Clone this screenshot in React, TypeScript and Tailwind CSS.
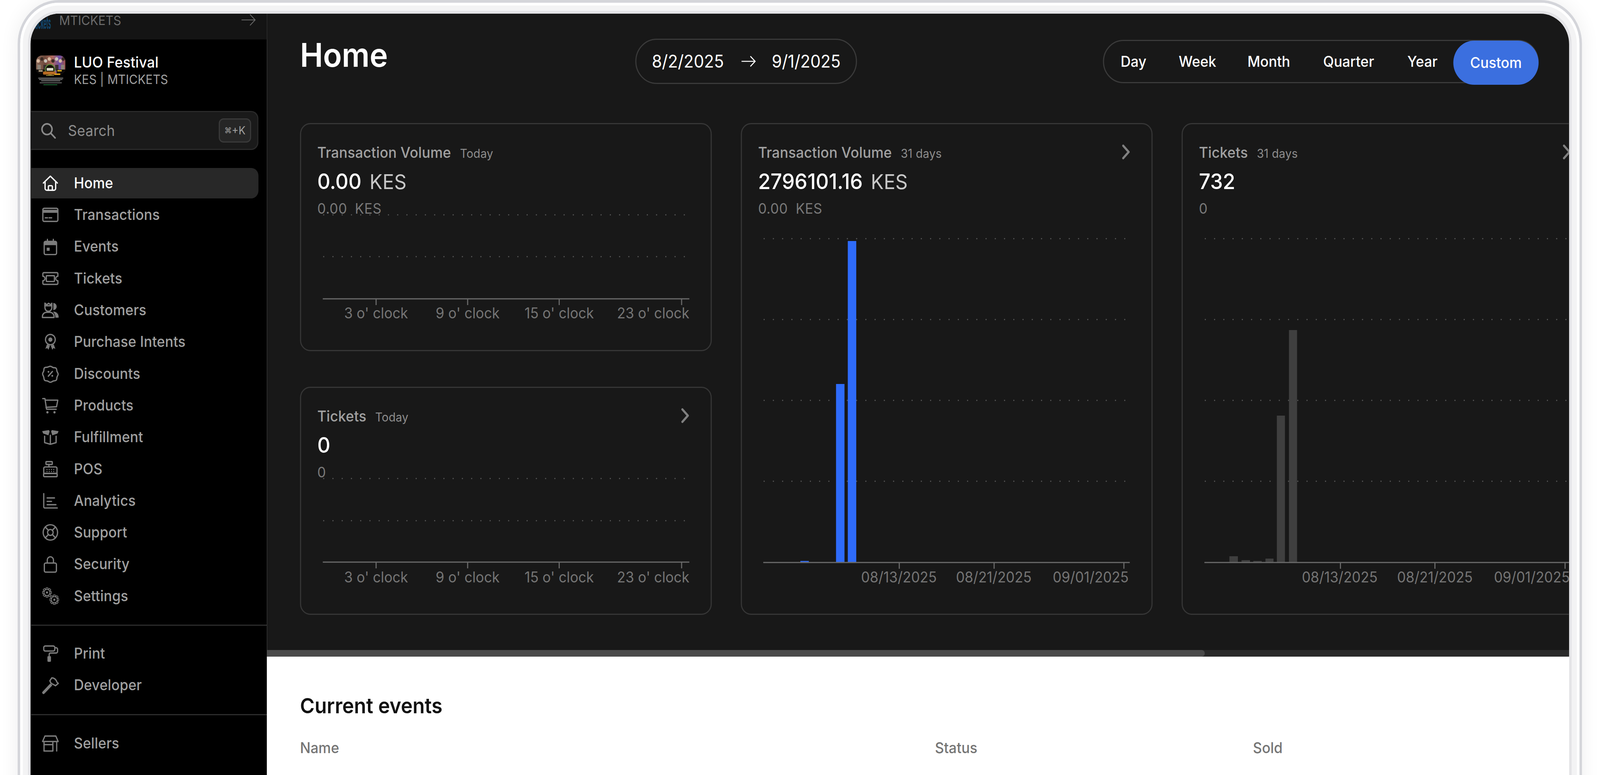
import React from "react";

const stroke = { fill: "none", stroke: "currentColor", strokeWidth: 1.7, strokeLinecap: "round" as const, strokeLinejoin: "round" as const };

function Gear({ cx, cy, r }: { cx: number; cy: number; r: number }) {
  const teeth = Array.from({ length: 8 }, (_, i) => i * 45);
  return (
    <g>
      {teeth.map((a) => (
        <rect key={a} x={cx - r * 0.3} y={cy - r - r * 0.32} width={r * 0.6} height={r * 0.5} rx={0.3} transform={`rotate(${a} ${cx} ${cy})`} fill="none" stroke="currentColor" strokeWidth={0.9} />
      ))}
      <circle cx={cx} cy={cy} r={r * 0.88} fill="#000" stroke="currentColor" strokeWidth={1.1} />
      <circle cx={cx} cy={cy} r={r * 0.3} fill="currentColor" />
    </g>
  );
}

const icons: Record<string, React.ReactNode> = {
  Home: (
    <g {...stroke}>
      <path d="M2.5 11.8 12 3l9.5 8.8" />
      <path d="M4.8 10v8.6A2.4 2.4 0 0 0 7.2 21h9.6a2.4 2.4 0 0 0 2.4-2.4V10" />
      <path d="M9.3 21v-4.6a1.2 1.2 0 0 1 1.2-1.2h3a1.2 1.2 0 0 1 1.2 1.2V21" />
    </g>
  ),
  Transactions: (
    <g>
      <rect x="1.8" y="3.6" width="20.4" height="16.8" rx="1.8" {...stroke} />
      <rect x="2" y="5.6" width="20" height="3.8" fill="currentColor" />
      <path d="M5 15.8h3.2M10.2 15.8h3.6" {...stroke} />
    </g>
  ),
  Events: (
    <g>
      <rect x="3.6" y="5" width="16.8" height="16.8" rx="1.8" {...stroke} />
      <rect x="4" y="5.4" width="16" height="4.4" fill="currentColor" />
      <path d="M8 2.4v3M16 2.4v3" {...stroke} />
      <rect x="7" y="13" width="4" height="4" fill="currentColor" />
    </g>
  ),
  Tickets: (
    <g {...stroke}>
      <path d="M3.2 4.5h17.6a1.4 1.4 0 0 1 1.4 1.4v3.2a2.9 2.9 0 0 0 0 5.8v3.2a1.4 1.4 0 0 1-1.4 1.4H3.2a1.4 1.4 0 0 1-1.4-1.4v-3.2a2.9 2.9 0 0 0 0-5.8V5.9a1.4 1.4 0 0 1 1.4-1.4Z" />
      <rect x="6.5" y="8.4" width="11" height="7.4" rx="0.8" />
    </g>
  ),
  Customers: (
    <g>
      <path d="M4.6 3 7 5.2 9.6 3.2 12.4 5.2l1.6-2v5.6a4.7 4.7 0 0 1-9.4 0Z" {...stroke} />
      <path d="M4.6 6.4h9.4" {...stroke} />
      <path d="M1.2 21.4v-1.2A5.4 5.4 0 0 1 6.6 14.8h5a5.4 5.4 0 0 1 5.4 5.4v1.2Z" {...stroke} />
      <path d="M16 2.8a4.6 4.6 0 0 1 0 9.2Z" fill="currentColor" />
      <path d="M15.6 14a6.6 6.6 0 0 1 7.6 6v1.6h-4.4c0-3-1-5.6-3.2-7.6Z" fill="currentColor" />
    </g>
  ),
  "Purchase Intents": (
    <g>
      <circle cx="12" cy="9.2" r="6.6" {...stroke} strokeDasharray="3.2 0.5" />
      <circle cx="12" cy="9.2" r="2.8" fill="currentColor" />
      <path d="M7.4 15.4 5.2 21l2.6-1 1.6 2.2 2-5.2M16.6 15.4l2.2 5.6-2.6-1-1.6 2.2-2-5.2" fill="currentColor" />
    </g>
  ),
  Discounts: (
    <g>
      <path d="M12 2.4c1.6 0 2.5 1.3 3.8 1.6s3-.1 4 .9.8 2.7 1.2 3.9 1.6 2.3 1.6 3.7-1.2 2.4-1.6 3.7.1 2.9-1 3.9-2.7.7-4 1.1-2.4 1.6-4 1.6-2.5-1.2-3.9-1.6-3-.1-4-1.1-.7-2.6-1.1-3.9S1.4 13.4 1.4 12s1.2-2.4 1.6-3.7-.1-2.9.9-3.9 2.7-.6 4-.9S10.4 2.4 12 2.4Z" {...stroke} />
      <path d="M14.8 9 9.2 15" {...stroke} />
      <circle cx="9.4" cy="9.4" r="1.2" fill="currentColor" />
      <circle cx="14.6" cy="14.6" r="1.2" fill="currentColor" />
    </g>
  ),
  Products: (
    <g>
      <path d="M1.6 3.2h3l2.2 13.6h13.2" {...stroke} />
      <path d="M4.9 5.2h17.2l-1.700 8.400-14.300.8" {...stroke} />
      <circle cx="8" cy="20.8" r="1.500" fill="currentColor" />
      <circle cx="17.6" cy="20.8" r="1.500" fill="currentColor" />
    </g>
  ),
  Fulfillment: (
    <g>
      <path d="M4.2 10.8v8.3L12 21.2l7.8-2.1v-8.3M12 9.6v11.4" {...stroke} />
      <path d="M.8 4.4 10 3l1 1.8-1.6 4.9-7.2-2.3ZM23.2 4.4 14 3l-1 1.8 1.6 4.9 7.2-2.3Z" fill="currentColor" />
    </g>
  ),
  POS: (
    <g>
      <rect x="6" y="2.4" width="8.6" height="3.6" rx="0.8" {...stroke} />
      <path d="M10 6v3" {...stroke} />
      <path d="M4.8 9.2h14.4a1.8 1.8 0 0 1 1.8 1.8v6.4H3V11a1.8 1.8 0 0 1 1.8-1.8Z" {...stroke} />
      <rect x="2.8" y="17.6" width="18.4" height="4" rx="1" {...stroke} />
      <path d="M7.4 12.4h.1M10.4 12.4h.1M13.5 12.4h.1M16.5 12.4h.1M7.4 15h.1M10.4 15h.1M13.5 15h.1M16.5 15h.1" {...stroke} strokeWidth={1.5} />
    </g>
  ),
  Analytics: (
    <g {...stroke}>
      <path d="M3 2.8v17a1.4 1.4 0 0 0 1.4 1.4h17" />
      <path d="M7.6 8.4h10M7.6 12.8h6M7.6 17h12" />
    </g>
  ),
  Support: (
    <g {...stroke}>
      <circle cx="12" cy="12" r="9.8" />
      <circle cx="12" cy="12" r="3.8" />
      <path d="m5 5 4.4 4.4M19 5l-4.4 4.4M5 19l4.4-4.4M19 19l-4.4-4.4" />
    </g>
  ),
  Security: (
    <g {...stroke}>
      <rect x="3.8" y="10.2" width="16.4" height="11.6" rx="1.8" />
      <path d="M7.8 10V6.4a4.2 4.2 0 0 1 8.4 0V10" />
    </g>
  ),
  Settings: (
    <g>
      <Gear cx={7.4} cy={7.4} r={4.6} />
      <Gear cx={17.4} cy={16.6} r={4.6} />
    </g>
  ),
  Print: (
    <g>
      <rect x="3" y="2.4" width="15" height="6.4" rx="2" {...stroke} />
      <path d="M18.4 4.6h1.4a2 2 0 0 1 2 2v2.8a2 2 0 0 1-2 2H12a1.6 1.6 0 0 0-1.6 1.6v1.6" {...stroke} />
      <rect x="8" y="15.2" width="4.8" height="7.4" rx="1.4" fill="currentColor" />
    </g>
  ),
  Developer: (
    <g>
      <path d="M1.5 20.3 12 9.8l2.6 2.6L4 22.8a1.8 1.8 0 0 1-2.6 0 1.8 1.8 0 0 1 .1-2.5Z" fill="currentColor" />
      <path d="M11.3 6.4 14 2.6c3.4.2 6 2.5 7.1 5.8l1.7 1.3-3.8 3-2.4-1.3-2.7-1.2-1.5-1.5Z" {...stroke} />
    </g>
  ),
  Sellers: (
    <g {...stroke}>
      <path d="M4.6 2.6h14.8l3.2 7H1.4Z" />
      <path d="M3.4 9.8v12M20.6 9.8v12" />
      <path d="M3.4 13.6h12v8.2h-12M15.4 9.8v12" />
    </g>
  ),
};

function NavIcon({ name }: { name: string }) {
  return (
    <svg viewBox="0 0 24 24" className="w-[48px] h-[48px] shrink-0">
      {icons[name]}
    </svg>
  );
}

function NavItem({ name, active }: { name: string; active?: boolean }) {
  return (
    <div className={`h-[78px] mb-[3.3px] w-[620px] flex items-center pl-[30px] rounded-r-[20px] ${active ? "bg-[#282828] text-white" : "text-[#7d7d7d]"}`}>
      <NavIcon name={name} />
      <span className={`ml-[40px] text-[37.5px] font-medium tracking-[0.2px] ${active ? "text-white" : "text-[#a0a0a0]"}`}>{name}</span>
    </div>
  );
}

function Poster() {
  return (
    <svg viewBox="0 0 80 80" className="w-[80px] h-[80px] shrink-0">
      <defs>
        <clipPath id="posterClip">
          <rect x="0" y="0" width="80" height="48" rx="16" />
        </clipPath>
        <linearGradient id="crowd" x1="0" x2="1">
          <stop offset="0" stopColor="#8a6a5a" />
          <stop offset="0.3" stopColor="#6f4a3c" />
          <stop offset="0.55" stopColor="#b06a5c" />
          <stop offset="0.8" stopColor="#6a4fa8" />
          <stop offset="1" stopColor="#a0544a" />
        </linearGradient>
      </defs>
      <g clipPath="url(#posterClip)">
        <rect width="80" height="48" fill="url(#crowd)" />
        {[6, 16, 26, 36, 46, 56, 66, 74].map((x, i) => (
          <circle key={x} cx={x} cy={i % 2 ? 9 : 14} r="4.5" fill={i % 3 === 0 ? "#d8b9a0" : i % 3 === 1 ? "#3a2a24" : "#c9c2b8"} />
        ))}
        {[4, 20, 34, 52, 68].map((x, i) => (
          <rect key={x} x={x} y={24} width="9" height="14" fill={i % 2 ? "#3c3030" : "#8e8478"} />
        ))}
        <rect x="0" y="36" width="26" height="12" fill="#0c0a08" />
        <rect x="56" y="36" width="24" height="12" fill="#0c0a08" />
        <rect x="7" y="37" width="11" height="5" fill="#9a8a70" />
        <rect x="58" y="37" width="12" height="4" fill="#c9a020" />
      </g>
      <circle cx="38" cy="36" r="13" fill="#141008" stroke="#5d8a3a" strokeWidth="2.5" />
      <rect x="29" y="32" width="18" height="7" fill="#d9d9c8" />
      <rect x="19" y="41" width="34" height="8" rx="2" fill="#b56a22" />
      <rect x="50" y="46" width="16" height="4" fill="#d99a1c" />
      <rect x="27" y="50" width="22" height="2.5" fill="#8a7a30" />
      <path d="M6 58h68M8 61.500h64M14 65h52" stroke="#b0b0b0" strokeWidth="1.300" />
      <path d="M10 70h60" stroke="#a0a0a0" strokeWidth="1.300" />
      <path d="M20 75h38" stroke="#2f9a50" strokeWidth="1.300" />
    </svg>
  );
}

type Bar = [number, number, number];

function Chart(props: {
  left: number;
  top: number;
  height: number;
  dots: number[];
  dotEnd: number;
  axisY: number;
  axisStart: number;
  axisEnd: number;
  ticks: number[];
  labels: { text: string; x: number; anchor: "middle" | "end" | "start" }[];
  labelY: number;
  bars?: Bar[];
  barColor?: string;
}) {
  const dotXs: number[] = [];
  for (let x = props.axisStart + 1; x <= props.dotEnd; x += 25.15) dotXs.push(x);
  return (
    <svg
      viewBox={`${props.left} ${props.top} 1114 ${props.height}`}
      width={1114}
      height={props.height}
      className="block overflow-visible"
    >
      {props.dots.map((y) => (
        <g key={y}>
          {dotXs.map((x) => (
            <rect key={x} x={x} y={y - 1.5} width="3" height="3" rx="1" fill="#5a5a5a" />
          ))}
        </g>
      ))}
      {props.bars?.map(([a, b, t]) => (
        <rect key={a} x={a} y={t} width={b - a} height={props.axisY - t} fill={props.barColor} />
      ))}
      <rect x={props.axisStart} y={props.axisY - 1.5} width={props.axisEnd - props.axisStart} height="3" fill="#6a6a6a" />
      {props.ticks.map((x) => (
        <rect key={x} x={x - 1.5} y={props.axisY} width="3" height="16" fill="#6a6a6a" />
      ))}
      {props.labels.map((l) => (
        <text key={l.text} x={l.x} y={props.labelY} textAnchor={l.anchor} fontSize={37.8} fill="#747474" fontFamily="Inter, sans-serif">
          {l.text}
        </text>
      ))}
    </svg>
  );
}

function Chevron({ className }: { className: string }) {
  return (
    <svg viewBox="0 0 22 38" className={className}>
      <path d="M3 3l15 16L3 35" fill="none" stroke="#808080" strokeWidth="5.5" strokeLinecap="round" strokeLinejoin="round" />
    </svg>
  );
}

function Card(props: {
  title: string;
  period: string;
  value: string;
  unit?: string;
  sub: string;
  subUnit?: string;
  chevron?: boolean;
  tall?: boolean;
  children: React.ReactNode;
}) {
  return (
    <div className={`relative w-[1120px] shrink-0 border-[3px] border-[#363636] rounded-[28px] ${props.tall ? "h-[1259px]" : "h-[584px]"}`}>
      <div className="h-[225px] pl-[44px] pt-[53px] overflow-visible">
        <div className="flex items-baseline h-[38px] leading-[38px]">
          <span className="text-[38px] font-medium text-[#a0a0a0] tracking-[0.2px]">{props.title}</span>
          <span className="ml-[24px] text-[31px] text-[#8c8c8c] tracking-[0.2px]">{props.period}</span>
        </div>
        <div className="flex items-baseline h-[60px] leading-[60px] mt-[25px]">
          <span className="text-[55px] font-medium text-white">{props.value}</span>
          {props.unit && <span className="ml-[22px] text-[52.5px] text-[#c8c8c8]">{props.unit}</span>}
        </div>
        <div className="flex items-baseline h-[44px] leading-[44px] mt-[18px]">
          <span className="text-[37px] text-[#787878] tracking-[0.6px]">{props.sub}</span>
          {props.subUnit && <span className="ml-[21px] text-[37px] text-[#787878] tracking-[0.6px]">{props.subUnit}</span>}
        </div>
      </div>
      {props.children}
      {props.chevron && <Chevron className="absolute right-[58px] top-[52px] w-[22px] h-[38px]" />}
    </div>
  );
}

const hourLabels = (l: number) => [
  { text: "3 o' clock", x: l + 207, anchor: "middle" as const },
  { text: "9 o' clock", x: l + 456, anchor: "middle" as const },
  { text: "15 o' clock", x: l + 705, anchor: "middle" as const },
  { text: "23 o' clock", x: l + 1059, anchor: "end" as const },
];

export default function App() {
  const nav1 = ["Home", "Transactions", "Events", "Tickets", "Customers", "Purchase Intents", "Discounts", "Products", "Fulfillment", "POS", "Analytics", "Support", "Security", "Settings"];
  const fit = typeof window === "undefined" ? 1 : window.innerWidth / 4352;
  return (
    <div className="w-screen h-screen overflow-hidden bg-white">
      <div className="w-[4352px] h-[1984px] overflow-hidden bg-white pl-[48px] pr-[49px] origin-top-left" style={{ fontFamily: "Inter, 'Liberation Sans', sans-serif", transform: `scaleX(${fit})` }}>
        <div className="h-[2100px] border-[7px] border-[#d4d5da] rounded-t-[112px] shadow-[0_0_50px_rgba(0,0,0,0.07)]">
          <div className="h-full border-[7px] border-white rounded-t-[105px]">
            <div className="h-full border-[14px] border-[#f3f3f4] rounded-t-[98px]">
              <div className="h-full border-[7px] border-[#e4e4e7] rounded-t-[84px]">
                <div className="h-full flex overflow-hidden rounded-t-[78px] bg-white">
                  <aside className="w-[643px] shrink-0 bg-black flex flex-col">
                    <div className="h-[66px] shrink-0 bg-[#141414] overflow-hidden flex items-start">
                      <div className="w-[78px] h-[44px] shrink-0 overflow-hidden mt-[1px] pl-[12px]">
                        <span className="block text-[44px] leading-[44px] font-bold text-[#12466e] origin-left scale-x-[0.3] whitespace-nowrap">tickets</span>
                      </div>
                      <span className="mt-[-8px] text-[33px] leading-[50px] text-[#6b6b6b]">MTICKETS</span>
                      <svg viewBox="0 0 40 32" className="ml-[326px] mt-[0px] w-[40px] h-[32px]">
                        <path d="M1 16h37M24 2l14 14-14 14" fill="none" stroke="#6b6b6b" strokeWidth="2" />
                      </svg>
                    </div>
                    <div className="flex items-start mt-[41px] ml-[15px]">
                      <Poster />
                      <div className="ml-[23px] -mt-[6px]">
                        <div className="text-[38px] leading-[46px] font-medium text-white tracking-[0.2px]">LUO Festival</div>
                        <div className="text-[32px] leading-[44px] text-[#a0a0a0] tracking-[0.2px]">KES | MTICKETS</div>
                      </div>
                    </div>
                    <div className="mt-[58px] w-[620px] h-[100px] bg-[#1a1a1a] border-[3px] border-l-0 border-[#2a2a2a] rounded-r-[20px] flex items-center pl-[27px] pr-[17px]">
                      <svg viewBox="0 0 40 40" className="w-[42px] h-[42px] shrink-0">
                        <circle cx="17" cy="17" r="13" fill="none" stroke="#8a8a8a" strokeWidth="4" />
                        <path d="M27 27l11 11" stroke="#8a8a8a" strokeWidth="4" strokeLinecap="round" />
                      </svg>
                      <span className="ml-[33px] text-[38px] text-[#8c8c8c] tracking-[0.3px]">Search</span>
                      <span className="ml-auto w-[88px] h-[62px] flex items-center justify-center bg-[#262626] border-[3px] border-[#3a3a3a] rounded-[13px] text-[28px] text-[#a0a0a0]" style={{ fontFamily: "'DejaVu Sans', Inter, sans-serif" }}>
                        <span className="text-[20px]">⌘</span><span style={{ fontFamily: "Inter, sans-serif" }}>+K</span>
                      </span>
                    </div>
                    <nav className="mt-[46px]">
                      {nav1.map((n) => (
                        <NavItem key={n} name={n} active={n === "Home"} />
                      ))}
                    </nav>
                    <div className="mt-[31px] h-[3px] bg-[#2c2c2c]" />
                    <div className="mt-[32px]">
                      <NavItem name="Print" />
                      <NavItem name="Developer" />
                    </div>
                    <div className="mt-[31px] h-[3px] bg-[#2c2c2c]" />
                    <div className="mt-[33px]">
                      <NavItem name="Sellers" />
                    </div>
                  </aside>
                  <main className="flex-1 min-w-0 flex flex-col">
                    <section className="h-[1629px] shrink-0 bg-[#181818] overflow-hidden pl-[90px] pr-[83px]">
                      <div className="grid grid-cols-[912px_1272px_1185px] items-start pt-[64px] h-[181px]">
                        <h1 className="text-[84px] leading-[84px] font-semibold text-white">Home</h1>
                        <div className="w-[603px] h-[116px] border-[3px] border-[#3a3a3a] rounded-full flex items-center pl-[42px] text-[44.5px] text-white">
                          <span>8/2/2025</span>
                          <svg viewBox="0 0 40 32" className="ml-[47px] w-[40px] h-[32px]">
                            <path d="M1 16h37M25 3l13 13-13 13" fill="none" stroke="#fff" strokeWidth="2.5" />
                          </svg>
                          <span className="ml-[43px]">9/1/2025</span>
                        </div>
                        <div className="relative mt-[3px] w-[1185px] h-[111px] border-[3px] border-[#3a3a3a] rounded-full text-[38px] font-medium text-white flex items-center">
                          <span className="absolute left-[45px]">Day</span>
                          <span className="absolute left-[203px]">Week</span>
                          <span className="absolute left-[390px]">Month</span>
                          <span className="absolute left-[596px]">Quarter</span>
                          <span className="absolute left-[825px]">Year</span>
                          <span className="absolute -right-[3px] -top-[1px] w-[232px] h-[113px] bg-[#3b6fdf] rounded-full flex items-center justify-center">Custom</span>
                        </div>
                      </div>
                      <div className="flex gap-[79px] mt-[99px] w-[3600px]">
                        <div className="flex flex-col gap-[91px] shrink-0">
                          <Card title="Transaction Volume" period="Today" value="0.00" unit="KES" sub="0.00" subUnit="KES">
                            <Chart left={819} top={543} height={330} dots={[550, 657]} dotEnd={1868} axisY={765} axisStart={878} axisEnd={1875} ticks={[1023, 1272, 1521, 1854]} labels={hourLabels(816)} labelY={815} />
                          </Card>
                          <Card title="Tickets" period="Today" value="0" sub="0" chevron>
                            <Chart left={819} top={1218} height={330} dots={[1225, 1333]} dotEnd={1868} axisY={1439} axisStart={878} axisEnd={1875} ticks={[1023, 1272, 1521, 1854]} labels={hourLabels(816)} labelY={1491} />
                          </Card>
                        </div>
                        <Card tall title="Transaction Volume" period="31 days" value="2796101.16" unit="KES" sub="0.00" subUnit="KES" chevron>
                          <Chart left={2018} top={543} height={1000} dots={[611, 818, 1025, 1232]} dotEnd={3064} axisY={1440} axisStart={2076} axisEnd={3073} ticks={[2446, 2704, 3057]} labels={[{ text: "08/13/2025", x: 2445, anchor: "middle" }, { text: "08/21/2025", x: 2703, anchor: "middle" }, { text: "09/01/2025", x: 3070, anchor: "end" }]} labelY={1491} barColor="#2e6bfa" bars={[[2177, 2200, 1436], [2241, 2264, 1439], [2274, 2297, 983], [2306, 2329, 617]]} />
                        </Card>
                        <Card tall title="Tickets" period="31 days" value="732" sub="0" chevron>
                          <Chart left={3217} top={543} height={1000} dots={[611, 818, 1025, 1232]} dotEnd={4263} axisY={1440} axisStart={3276} axisEnd={4273} ticks={[3646, 3903, 4257]} labels={[{ text: "08/13/2025", x: 3644, anchor: "middle" }, { text: "08/21/2025", x: 3903, anchor: "middle" }, { text: "09/01/2025", x: 4270, anchor: "end" }]} labelY={1491} barColor="#3f3f3f" bars={[[3344, 3367, 1424], [3377, 3400, 1434], [3409, 3432, 1436], [3442, 3464, 1430], [3473, 3495, 1064], [3506, 3528, 845]]} />
                        </Card>
                      </div>
                    </section>
                    <div className="h-[17px] shrink-0 bg-[#2a2a2a]">
                      <div className="h-full w-[2551px] bg-[#4a4a4a] rounded-r-[10px]" />
                    </div>
                    <section className="flex-1 bg-white pl-[90px] pt-[100px]">
                      <h2 className="text-[54px] leading-[52px] font-semibold text-[#111]">Current events</h2>
                      <div className="grid grid-cols-[1727px_865px_1fr] mt-[58px] text-[38px] leading-[46px] font-medium text-[#757575]">
                        <span>Name</span>
                        <span>Status</span>
                        <span>Sold</span>
                      </div>
                    </section>
                  </main>
                </div>
              </div>
            </div>
          </div>
        </div>
      </div>
    </div>
  );
}
